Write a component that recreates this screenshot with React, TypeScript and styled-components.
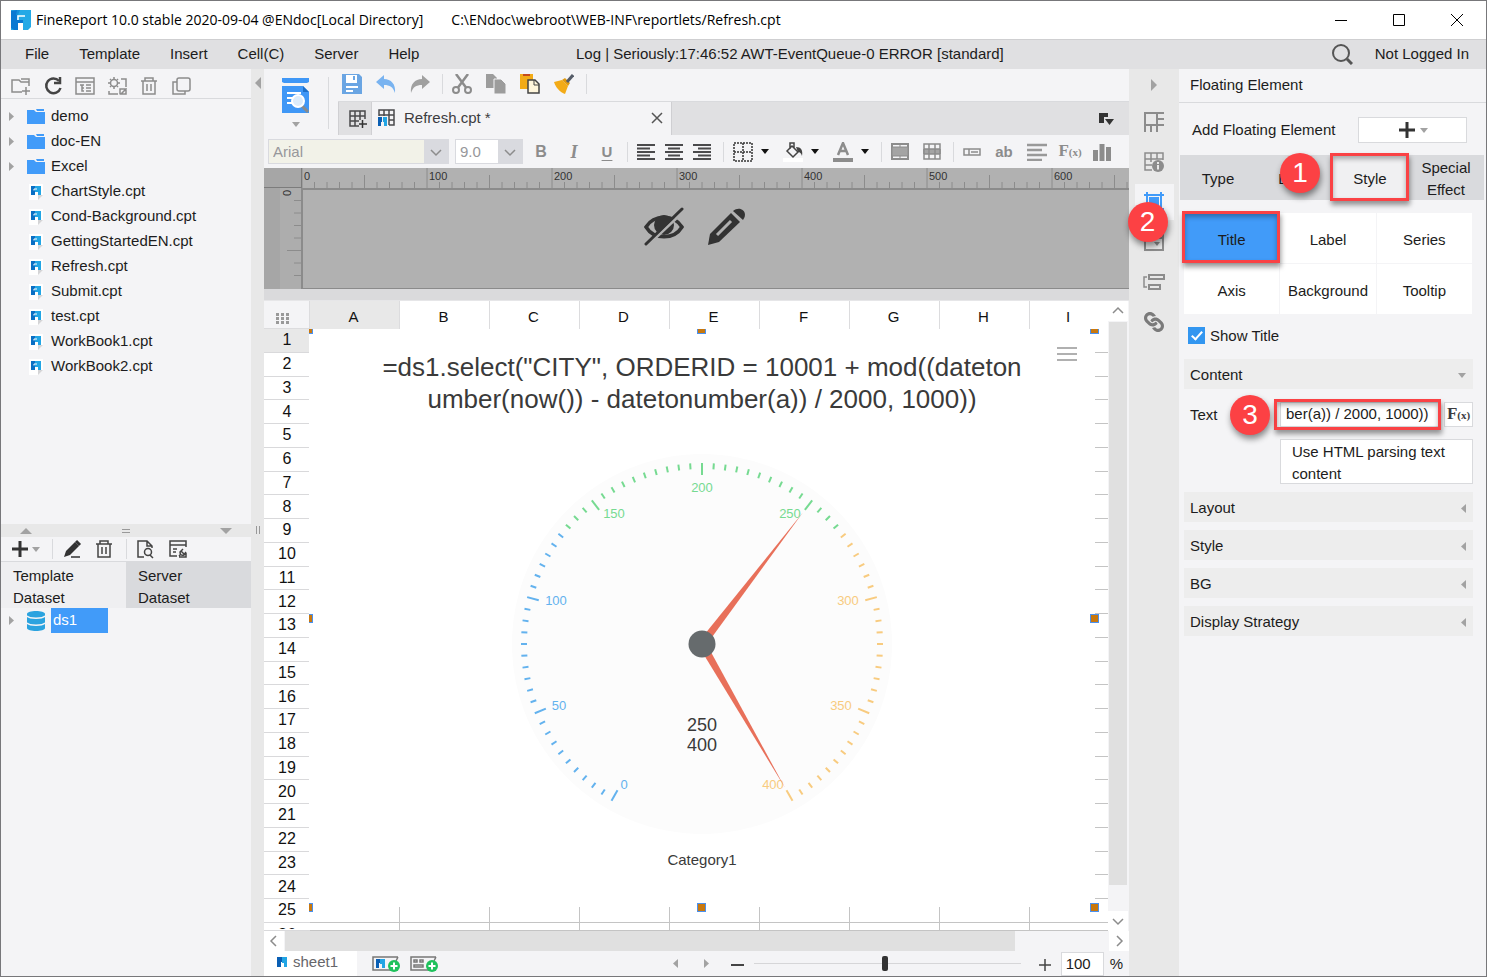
import React from "react";
import styled, { createGlobalStyle, css } from "styled-components";
import { FaLink } from "react-icons/fa";

const GlobalStyle = createGlobalStyle`
  *, *::before, *::after { box-sizing: border-box; }
  body { margin: 0; background: #f4f4f6; }
  body, button, input, select {
    font-family: "Liberation Sans", Arial, sans-serif;
    font-size: 15px;
    line-height: 22px;
    color: #1c1c20;
  }
  button {
    display: inline-flex; align-items: center; justify-content: center;
    flex: none; margin: 0; padding: 0; border: 0; background: none;
  }
  ul { list-style: none; margin: 0; padding: 0; }
  svg { display: block; flex: none; }
`;

/* ---------- window frame ---------- */

const Window = styled.div`
  display: flex; flex-direction: column;
  min-height: 100vh; min-width: 1200px;
  border: 1px solid #77777a;
  background: #f4f4f6;
`;
const TitleBar = styled.header`
  display: flex; align-items: center;
  height: 39px; padding-left: 10px;
  background: #fff; border-bottom: 1px solid #cfcfd1;
`;
const TitleText = styled.h1`
  display: flex; gap: 28px; margin: 0 0 0 5px; flex: 1;
  font: 400 14px/22px "Open Sans", "Noto Sans", sans-serif;
  color: #000; white-space: nowrap;
`;
const WindowButton = styled.button`width: 58px; height: 38px;`;
const MenuBar = styled.div`
  display: grid; grid-template-columns: 575px 1fr auto;
  align-items: center; height: 29px; padding-bottom: 2px; background: #e0e0e2;
`;
const Menus = styled.nav`display: flex; gap: 30px; padding-left: 24px;`;
const Account = styled.div`display: flex; align-items: center; gap: 22px; padding-right: 17px;`;
const Body = styled.div`display: flex; flex: 1;`;
const VLine = styled.span<{ $h?: number }>`
  flex: none; width: 1px; height: ${p => p.$h ?? 20}px; background: #d9dadd;
  margin: 0 9px 0 12px;
`;

/* ---------- left side ---------- */

const LeftSide = styled.aside`display: flex; flex-direction: column; flex: none; width: 250px;`;
const FilePane = styled.section`flex: 1;`;
const DataPane = styled.section`height: 452px;`;
const IconBar = styled.div<{ $h: number; $gap: number; $pad: number }>`
  display: flex; align-items: center; gap: ${p => p.$gap}px;
  height: ${p => p.$h}px; padding: ${p => p.$pad}px 10px 0;
  border-bottom: 1px solid #d9dadd;
`;
const Tree = styled.ul`padding-top: 5px;`;
const TreeRow = styled.li`
  display: grid; grid-template-columns: 18px 24px auto;
  align-items: center; justify-content: start;
  height: 25px; padding-left: 8px;
`;
const TreeLabel = styled.button<{ $on?: boolean }>`
  justify-content: flex-start; height: 25px; padding: 0 0 1px;
  ${p => p.$on && css`width: 57px; padding-left: 2px; background: #419bf9; color: #fff;`}
`;
const PaneGrip = styled.div`
  display: flex; align-items: center; justify-content: space-between;
  height: 13px; padding: 0 19px; background: #e8e8e8;
`;
const DatasetTabs = styled.div`display: grid; grid-template-columns: 1fr 1fr;`;
const DatasetTab = styled.button<{ $on?: boolean }>`
  height: 46px; padding: 4px 36px 0 12px; text-align: left; justify-content: flex-start;
  background: ${p => (p.$on ? "#efeff1" : "#d9dadd")};
`;
const SideSplitter = styled.div`
  display: flex; flex-direction: column; align-items: center; justify-content: space-between;
  flex: none; width: 13px; padding-top: 8px; padding-bottom: 442px;
  background: #e8e8e8;
`;

/* ---------- centre ---------- */

const Center = styled.main`display: flex; flex-direction: column; flex: 1; min-width: 0;`;
const TopTools = styled.div`display: flex; height: 66px;`;
const PreviewButton = styled.button`
  flex-direction: column; gap: 8px; justify-content: flex-start;
  width: 64px; padding-top: 8px;
`;
const PreviewLine = styled.span`width: 1px; height: 52px; margin: 8px 9px 0 0; background: #d9dadd;`;
const ToolsColumn = styled.div`flex: 1; min-width: 0;`;
const Tools = styled.div`display: flex; align-items: center; height: 32px; padding: 0 0 2px 4px;`;
const ToolGroup = styled.div<{ $gap: number }>`display: flex; align-items: center; gap: ${p => p.$gap}px;`;
const TextTools = styled(ToolGroup)`padding-left: 4px;`;
const FileTabs = styled.div`
  display: flex; height: 34px; background: #e0e0e2; border-top: 1px solid #d9dadd;
`;
const NewTab = styled.button`width: 34px; padding-left: 6px; border: 1px solid #d0d0d3; border-width: 0 1px;`;
const FileTab = styled.div`
  display: flex; align-items: center; gap: 8px;
  width: 300px; padding: 0 8px 2px 6px;
  background: #f4f4f6; border-right: 1px solid #cfcfd2; color: #3c3c40;
`;
const FileTabName = styled.span`flex: 1;`;
const TabList = styled.button`margin-left: auto; width: 44px;`;
const FormatBar = styled.div`
  display: flex; align-items: center; height: 33px; padding-left: 4px;
`;
const Combo = styled.label<{ $w: number; $tint?: boolean }>`
  display: flex; align-items: stretch; width: ${p => p.$w}px; height: 25px; margin-right: 6px;
  border: 1px solid #d9dadf; background: ${p => (p.$tint ? "#f2f2e8" : "#fff")};
`;
const ComboSelect = styled.select`
  appearance: none; flex: 1; min-width: 0; padding: 0 4px; border: 0; background: none;
  color: #97979b; border-radius: 0; opacity: 1;
`;
const ComboArrow = styled.span`
  display: flex; align-items: center; justify-content: center; width: 24px; background: #d9dadf;
`;
const TextTool = styled.button<{ $kind: "b" | "i" | "u" }>`
  width: 16px; height: 22px; color: #8c8c8c; font-weight: 700; font-size: 16px;
  ${p => p.$kind === "i" && css`font-family: "Liberation Serif", serif; font-style: italic; font-size: 18px;`}
  ${p => p.$kind === "u" && css`text-decoration: underline; text-underline-offset: 3px; font-size: 15px;`}
`;
const DropTool = styled.button`gap: 8px;`;
const WordTool = styled.button`
  width: 20px; height: 22px; font-weight: 700; color: #8c8c8c;
`;
const FxWord = styled.span<{ $dark?: boolean }>`
  font: 700 17px/22px "Liberation Serif", serif; color: ${p => (p.$dark ? "#3c3c40" : "#8c8c8c")};
  small { font-size: 11px; font-weight: 700; }
`;

const ParamPane = styled.section`
  display: grid; grid-template-columns: 16px 21px 1fr; grid-template-rows: 20px 101px;
  background: #a6a6a6;
`;
const RulerTop = styled.svg`
  grid-column: 3; width: 100%; height: 20px; background: #b1b1b1; border-left: 1px solid #7c7c7c;
`;
const RulerCorner = styled.span`grid-column: 1 / 3; border-bottom: 1px solid #7c7c7c; background: #a6a6a6;`;
const RulerSide = styled.svg`grid-column: 2; grid-row: 2; width: 21px; height: 101px; background: #adadad;`;
const ParamCanvas = styled.div`
  grid-column: 3; display: flex; justify-content: center; gap: 22px;
  padding: 17px 42px 0 0; background: #b1b1b1;
  border: solid #8b8b8b; border-width: 2px 0 1px 2px;
`;
const PaneStrip = styled.div`height: 12px; background: #dadadc; border-bottom: 1px solid #e6e6e8;`;

const SheetArea = styled.section`display: flex; flex: 1;`;
const SheetView = styled.div`position: relative; display: flex; flex: 1; min-width: 0; overflow: hidden; background: #fff;`;
const Grid = styled.table`
  flex: 1; width: 100%; table-layout: fixed; border-collapse: separate; border-spacing: 0;
  th, td { padding: 0; font-weight: 400; font-size: 16px; line-height: 20px; color: #111; }
  td { border: solid #c4c4c4; border-width: 0 1px 1px 0; }
  td:last-child { border-right: 0; }
`;
const HeadCell = styled.th<{ $on?: boolean }>`
  height: 28px; border-right: 1px solid #dcdcde;
  background: ${p => (p.$on ? "#e8e8e8" : "#fff")};
  && { padding: 4px 2px 0 0; font-size: 15px; }
  &:last-child { border-right: 0; }
`;
const CornerCell = styled.th`height: 28px; background: #f4f4f6; border: solid #dcdcde; border-width: 0 1px 1px 0;`;
const RowHead = styled.th<{ $on?: boolean }>`
  background: ${p => (p.$on ? "#e8e8e8" : "#fff")};
  border: solid #d9d9db; border-width: 0 0 1px;
`;
const CutRow = styled.div`height: 6px; overflow: hidden; line-height: 24px;`;
const FloatLayer = styled.div`position: absolute; inset: 28px 0 0 45px; overflow: hidden; pointer-events: none;`;
const FloatFrame = styled.div`
  position: absolute; inset: 0 13px 24px 0; display: flex; flex-direction: column; align-items: center;
  background: #fff; color: #3a3a3a;
`;
const Handle = styled.span<{ $x: number; $y: number }>`
  position: absolute; left: ${p => p.$x}%; top: ${p => p.$y}%;
  width: 9px; height: 9px; margin: -4px 0 0 -5px;
  background: #c8780f; border: 1px solid #4a90ee;
`;
const ChartMenu = styled.button`position: absolute; top: 17px; right: 18px;`;
const ChartTitle = styled.h2`
  margin: 22px 0 0; text-align: center; font-weight: 400; font-size: 26px; line-height: 32px; white-space: nowrap;
`;
const Gauge = styled.svg`margin-top: 24px; flex: 1; min-height: 380px; font-size: 13px; text-anchor: middle;`;
const Category = styled.p`margin: 0 0 36px; line-height: 22px;`;

const ScrollColumn = styled.div`display: flex; flex-direction: column; width: 21px; background: #f4f4f6;`;
const ScrollArrow = styled.button`width: 20px; height: 20px; background: #fff;`;
const ScrollThumbV = styled.span`flex: 1; margin: 1px 2px 26px 1px; background: #e0e0e0;`;
const ScrollRow = styled.div`display: flex; height: 20px; background: #f4f4f6;`;
const ScrollThumbH = styled.span`flex: 1; margin: 0 94px 0 1px; background: #e0e0e0;`;
const SheetBar = styled.footer`display: flex; align-items: center; height: 25px;`;
const SheetTab = styled.button`
  gap: 4px; justify-content: flex-start; width: 93px; height: 25px; margin-right: 15px; padding: 0 0 4px 11px;
  background: #fff; color: #66666a;
`;
const AddSheet = styled.button`margin-right: 10px;`;
const ZoomTools = styled.div`display: flex; align-items: center; margin-left: auto; padding-right: 6px;`;
const ZoomRange = styled.input`
  appearance: none; width: 267px; height: 16px; margin: 0 18px 0 2px; background: transparent;
  &::-webkit-slider-runnable-track { height: 1px; background: #d6d6d8; }
  &::-webkit-slider-thumb {
    appearance: none; width: 6px; height: 15px; margin-top: -7px; border-radius: 2px; background: #333;
  }
`;
const ZoomInput = styled.input`
  width: 43px; height: 24px; margin: 0 6px 0 10px; padding: 0 4px; border: 1px solid #d9dadd; background: #fff;
`;
const StepArrow = styled.button`width: 31px; height: 20px;`;

/* ---------- right side ---------- */

const Rail = styled.nav`
  display: flex; flex-direction: column; align-items: center; flex: none; width: 50px; background: #e8e8e8;
`;
const RailButton = styled.button<{ $on?: boolean }>`
  position: relative; width: 39px; height: 36px; margin-bottom: 4px; color: #7a7a7a;
  background: ${p => (p.$on ? "#f4f4f6" : "none")};
`;
const ChainIcon = styled(FaLink)`width: 20px; height: 20px; transform: rotate(90deg);`;
const Fold = styled.button`height: 31px; width: 39px; margin-bottom: 4px;`;
const Badge = styled.span<{ $left: number; $top: number }>`
  position: absolute; z-index: 3; left: ${p => p.$left}px; top: ${p => p.$top}px;
  display: flex; align-items: center; justify-content: center;
  width: 40px; height: 40px; border-radius: 50%; background: #fc4144; color: #fff;
  font-size: 28px; line-height: 32px; box-shadow: 1px 4px 6px rgba(0, 0, 0, 0.45);
`;
const marked = css`
  position: relative;
  &::after {
    content: ""; position: absolute; z-index: 2; inset: -2px -1px 0 -2px; border: 3px solid #fa4245;
    box-shadow: 1px 4px 5px rgba(0, 0, 0, 0.4), inset 0 3px 5px rgba(0, 0, 0, 0.3);
    pointer-events: none;
  }
`;
const Inspector = styled.aside`flex: none; width: 307px;`;
const InspectorTitle = styled.h2`
  margin: 0; height: 34px; padding: 5px 11px; font-weight: 400; font-size: 15px; line-height: 22px;
  border-bottom: 1px solid #d9dadd;
`;
const AddRow = styled.div`
  display: flex; align-items: center; justify-content: space-between; height: 52px; padding: 2px 19px 0 13px;
`;
const AddButton = styled.button`gap: 4px; width: 109px; height: 26px; background: #fff; border: 1px solid #d9dadd;`;
const PropTabs = styled.div`
  display: grid; grid-template-columns: repeat(4, 1fr); margin: 0 2px 0 1px; height: 45px; background: #d9dadd;
`;
const PropTab = styled.button<{ $on?: boolean }>`
  padding-top: 2px;
  ${p => p.$on && css`background: #f0f0f2; ${marked}`}
`;
const PartGrid = styled.div`
  display: grid; grid-template-columns: repeat(3, 1fr); grid-auto-rows: 50px; gap: 1px;
  margin: 13px 14px 0 5px; background: #f4f4f6;
`;
const PartButton = styled.button<{ $on?: boolean }>`
  background: #fff; padding-top: 4px;
  ${p => p.$on && css`background: #419bf9; ${marked}`}
`;
const CheckRow = styled.label`display: flex; align-items: center; gap: 5px; height: 45px; padding: 0 0 2px 9px;`;
const Check = styled.input`
  appearance: none; width: 17px; height: 17px; margin: 0; background: #3296f0;
  display: grid; place-items: center;
  &::before { content: ""; width: 6px; height: 11px; margin-top: -3px; border: solid #fff; border-width: 0 2px 2px 0; transform: rotate(42deg); }
`;
const Sections = styled.div`display: flex; flex-direction: column; gap: 8px; margin: 0 13px 0 5px;`;
const Section = styled.button`
  justify-content: space-between; width: 100%; height: 30px; padding: 2px 7px 0 6px; background: #ededed;
`;
const ContentForm = styled.div`
  display: grid; grid-template-columns: 86px 160px 29px; column-gap: 4px; row-gap: 12px; align-items: center;
  padding: 5px 0 0 6px;
`;
const FieldLabel = styled.label`position: relative;`;
const FieldBox = styled.div`${marked} &::after { inset: -3px -1px -3px -6px; }`;
const Field = styled.input`
  display: block; width: 100%; height: 25px; padding: 0 4px 2px 5px; border: 1px solid #d9dadd; background: #fff;
`;
const FxButton = styled.button`width: 29px; height: 25px; background: #fff; border: 1px solid #d9dadd;`;
const HtmlButton = styled.button`
  grid-column: 2 / 4; height: 45px; padding: 2px 20px 0 11px; justify-content: flex-start; text-align: left;
  background: #fff; border: 1px solid #d9dadd; line-height: 22px;
`;

/* ---------- icons ---------- */

type Draw = { w?: number; h?: number; c?: string; s?: number; children: React.ReactNode };
const Icon = ({ w = 20, h = 20, c = "#8c8c8c", s = 2, children }: Draw) => (
  <svg width={w} height={h} viewBox={`0 0 ${w} ${h}`} fill="none" stroke={c} strokeWidth={s} aria-hidden="true">
    {children}
  </svg>
);
const Caret = ({ dir, c = "#a2a2a2", big }: { dir: "l" | "r" | "u" | "d"; c?: string; big?: boolean }) => {
  const wide = dir === "u" || dir === "d";
  const a = big ? 12 : wide ? 8 : 9, b = big ? 6 : 5;
  const d = { r: `M0 0V${a}L${b} ${a / 2}Z`, l: `M${b} 0V${a}L0 ${a / 2}Z`, u: `M0 ${b}H${a}L${a / 2} 0Z`, d: `M0 0H${a}L${a / 2} ${b}Z` }[dir];
  return <svg width={wide ? a : b} height={wide ? b : a} aria-hidden="true"><path d={d} fill={c} /></svg>;
};
const Chevron = ({ d, c = "#8c8c8c" }: { d: string; c?: string }) => <Icon w={14} h={14} s={1.5} c={c}><path d={d} /></Icon>;

const Logo = ({ size }: { size: number }) => (
  <svg width={size} height={size} viewBox="0 0 20 20" aria-hidden="true">
    <path d="M0 0H20V17L17 20H0Z" fill="#24a9e6" />
    <path d="M0 1L6 0V20H3L0 18Z" fill="#0a79d2" />
    <path d="M6 0H9L7 5H5Z" fill="#1590dc" />
    <path d="M3 10H12V13H7V20H3Z" fill="#0a79d2" />
    <path d="M7 10V6H14" stroke="#fff" strokeWidth="1.5" fill="none" />
    <path d="M7 13H12V20H7Z" fill="#fff" />
  </svg>
);
const FolderIcon = () => (
  <svg width="18" height="15" aria-hidden="true"><path d="M0 1H7L9 3H18V15H0Z" fill="#419bf9" /><path d="M9 0H17V2H10Z" fill="#419bf9" /></svg>
);
const FileIcon = () => (
  <svg width="18" height="18" viewBox="0 0 18 18" aria-hidden="true">
    <path d="M2 1H16V12L11 17H2Z" fill="#fff" /><path d="M11 17V12H16Z" fill="#d4d4d6" />
    <path d="M4 3H8V12H4Z" fill="#0a6fc4" /><path d="M8 3H14V12H11V9H8Z" fill="#22a5e4" />
    <path d="M7 7.500V6H10" stroke="#fff" fill="none" />
  </svg>
);
const DbIcon = () => (
  <svg width="18" height="20" viewBox="0 0 18 20" aria-hidden="true">
    <path d="M0 3V17C0 21 18 21 18 17V3C18-1 0-1 0 3Z" fill="#2ba3df" />
    <path d="M0 5C2 8 16 8 18 5M0 12C2 15 16 15 18 12" stroke="#f4f4f6" fill="none" strokeWidth="1.5" />
  </svg>
);
const Trash = ({ c }: { c?: string }) => (
  <Icon c={c} s={1.5}><path d="M2 5H18M6 5V2H14V5M4 5V18H16V5M8 8V15M12 8V15" /></Icon>
);
const Plus = () => <Icon w={18} h={18} c="#333" s={3}><path d="M1 9H17M9 1V17" /></Icon>;
const Lines = ({ rows, c = "#4a4a4c", w = 18, s = 2 }: { rows: number[][]; c?: string; w?: number; s?: number }) => (
  <Icon w={w} h={18} c={c} s={s}>{rows.map(([a, b], i) => <path key={i} d={`M${a} ${2 + i * (s === 2 ? 3.5 : 5)}H${b}`} />)}</Icon>
);
const GreenPlus = () => (
  <><circle cx="22" cy="11" r="6" fill="#1fc15c" stroke="none" /><path d="M18.5 11H25.5M22 7.5V14.5" stroke="#fff" strokeWidth="2" /></>
);
const TableGlyph = ({ children }: { children?: React.ReactNode }) => (
  <Icon w={18} h={18} c="#4a4a4c" s={1.5}><path d="M10 16H1V1H16V9M1 6H16M1 11H10M6 1V16M11 1V10" />{children}</Icon>
);

/* ---------- gauge ---------- */

const bandColor = (v: number) => (v < 133.4 ? "#63b2ee" : v < 266.7 ? "#76da91" : "#f8cb7f");
const dialPoint = (v: number, r: number) => {
  const a = ((v * 0.75 - 150) * Math.PI) / 180;
  return [190 + r * Math.sin(a), 190 - r * Math.cos(a)];
};
const dialLabels: [number, number, number][] = [
  [0, 112, 335], [50, 47, 256], [100, 44, 151], [150, 102, 64], [200, 190, 38],
  [250, 278, 64], [300, 336, 151], [350, 329, 256], [400, 261, 335],
];
const Needle = ({ v }: { v: number }) => (
  <path d="M186 190L190 24L194 190Z" fill="#e8705a" transform={`rotate(${v * 0.75 - 150} 190 190)`} />
);
const GaugeChart = () => (
  <Gauge width="380" viewBox="0 0 380 380" role="img" aria-label="Gauge">
    <circle cx="190" cy="190" r="190" fill="#fcfcfc" />
    {Array.from({ length: 81 }, (_, i) => {
      const v = i * 5, major = i % 10 === 0;
      const [x1, y1] = dialPoint(v, 181), [x2, y2] = dialPoint(v, major ? 169 : 175);
      return <line key={v} x1={x1} y1={y1} x2={x2} y2={y2} stroke={bandColor(v)} strokeWidth={2} />;
    })}
    {dialLabels.map(([v, x, y]) => <text key={v} x={x} y={y} fill={bandColor(v)}>{v}</text>)}
    <Needle v={250} /><Needle v={400} />
    <circle cx="190" cy="190" r="13.5" fill="#666b6d" />
    <text x="190" y="277" fontSize="18" fill="#3a3a3a">250</text>
    <text x="190" y="297" fontSize="18" fill="#3a3a3a">400</text>
  </Gauge>
);

/* ---------- data ---------- */

const folders = ["demo", "doc-EN", "Excel"];
const files = ["ChartStyle.cpt", "Cond-Background.cpt", "GettingStartedEN.cpt", "Refresh.cpt", "Submit.cpt", "test.cpt", "WorkBook1.cpt", "WorkBook2.cpt"];
const columns = "ABCDEFGHI".split("");
const handles = [[0, 0], [50, 0], [100, 0], [0, 50], [100, 50], [0, 100], [50, 100], [100, 100]];

const LeftPanel = () => (
  <LeftSide>
    <FilePane>
      <IconBar $h={30} $gap={12} $pad={4}>
        <button aria-label="New folder"><Icon s={1.5}><path d="M11 16H1V4H8L10 6H18V10M10 3H18V6M15 11V19M11 15H19" /></Icon></button>
        <button aria-label="Refresh"><Icon c="#444" s={2.5}><path d="M16 5A7.3 7.3 0 1 0 17.5 12" /><path d="M17 1V7H11" /></Icon></button>
        <button aria-label="Details"><Icon s={1.5}><path d="M1 2H19V18H1ZM1 6H19M5 9H9M7 9V15H9M7 12H9M11 9H16M11 12H16M11 15H16" /></Icon></button>
        <button aria-label="Settings"><Icon s={1.5}><circle cx="7" cy="7" r="3.5" /><path d="M7 1V3M7 11V13M1 7H3M11 7H13M3 3L4 4M10 10L11 11M11 3L10 4M3 11L4 10M14 3H19V11M2 15V18H11M13 18V13H19L14 18H19V13" /></Icon></button>
        <button aria-label="Delete"><Trash /></button>
        <button aria-label="Copy"><Icon s={1.5}><rect x="6" y="2" width="13" height="13" rx="2" /><path d="M6 6H2V18H14V15" /></Icon></button>
      </IconBar>
      <Tree>
        {folders.map(f => <TreeRow key={f}><Caret dir="r" /><FolderIcon /><TreeLabel>{f}</TreeLabel></TreeRow>)}
        {files.map(f => <TreeRow key={f}><span /><FileIcon /><TreeLabel>{f}</TreeLabel></TreeRow>)}
      </Tree>
    </FilePane>
    <DataPane>
      <PaneGrip><Caret dir="u" big /><Icon w={8} h={6} s={1} c="#999"><path d="M0 1.5H8M0 4.5H8" /></Icon><Caret dir="d" big /></PaneGrip>
      <IconBar $h={25} $gap={0} $pad={0}>
        <ToolGroup $gap={3}><Plus /><Caret dir="d" /></ToolGroup>
        <VLine />
        <ToolGroup $gap={12}>
          <button aria-label="Edit"><Icon c="#333"><path d="M2 18L4 12L13 3L17 7L8 16Z" fill="#333" stroke="none" /><path d="M14 2L18 6" strokeWidth="3" /><path d="M9 18H18" strokeWidth="1.5" /></Icon></button>
          <button aria-label="Delete dataset"><Trash c="#444" /></button>
        </ToolGroup>
        <VLine />
        <ToolGroup $gap={12}>
          <button aria-label="Preview dataset"><Icon c="#444" s={1.5}><path d="M8 18H2V2H11L16 7V9M11 2V7H16" /><circle cx="12" cy="13" r="3.5" /><path d="M14 16L17 19" /></Icon></button>
          <button aria-label="Connection"><Icon c="#444" s={1.5}><path d="M9 17H2V2H18V8M2 6H18M5 10H9M5 13H8M11 17L13 15M13 12L17 16M15 10L12 13Q12 17 16 16L18 13M11 18H18V14" /></Icon></button>
        </ToolGroup>
      </IconBar>
      <DatasetTabs><DatasetTab $on>Template Dataset</DatasetTab><DatasetTab>Server Dataset</DatasetTab></DatasetTabs>
      <ul><TreeRow><Caret dir="r" /><DbIcon /><TreeLabel $on>ds1</TreeLabel></TreeRow></ul>
    </DataPane>
  </LeftSide>
);

const TopToolbar = () => (
  <TopTools>
    <PreviewButton aria-label="Preview">
      <svg width="28" height="37" aria-hidden="true">
        <path d="M0 1H27V5L25 6H2L0 5ZM0 9H21L27 15V36H0Z" fill="#3f97f6" />
        <path d="M21 9V15H27Z" fill="#1d6fc8" />
        <path d="M5 16H19M5 21H12M5 26H11" stroke="#fff" strokeWidth="2" />
        <path d="M20 29L26 35" stroke="#8a8a8a" strokeWidth="3" />
        <circle cx="16" cy="24" r="6" fill="#dcecfb" stroke="#fff" strokeWidth="2" />
      </svg>
      <Caret dir="d" />
    </PreviewButton>
    <PreviewLine />
    <ToolsColumn>
      <Tools>
        <ToolGroup $gap={14}>
          <button aria-label="Save"><svg width="20" height="20" aria-hidden="true"><path d="M0 0H17L20 3V20H0Z" fill="#6aa5e3" /><path d="M4 1H15V9H4ZM4 12H16V14H4ZM4 16H11V18H4Z" fill="#fff" /><path d="M11 2H13V6H11Z" fill="#6aa5e3" /></svg></button>
          <button aria-label="Undo"><svg width="20" height="20" aria-hidden="true"><path d="M0 8L8 1V5C15 5 20 10 19 19C17 13 14 11 8 11V15Z" fill="#79b3f0" /></svg></button>
          <button aria-label="Redo"><svg width="20" height="20" aria-hidden="true"><path d="M20 8L12 1V5C5 5 0 10 1 19C3 13 6 11 12 11V15Z" fill="#a0a0a0" /></svg></button>
        </ToolGroup>
        <VLine />
        <ToolGroup $gap={14}>
          <button aria-label="Cut"><Icon s={2}><circle cx="4" cy="16" r="3" /><circle cx="16" cy="16" r="3" /><path d="M4 0L14 13.5M16 0L6 13.5" strokeWidth="2.5" /></Icon></button>
          <button aria-label="Copy cells"><svg width="20" height="20" aria-hidden="true"><path d="M0 0H7L11 4V14H0Z" fill="#9c9c9c" /><path d="M8 5H15L20 10V20H8Z" fill="#9c9c9c" stroke="#f4f4f6" /></svg></button>
          <button aria-label="Paste"><svg width="20" height="20" aria-hidden="true"><path d="M0 0H13V15H0Z" fill="#f3ab17" /><path d="M3 0H10V2H3Z" fill="#c54a1c" /><path d="M8 6H15L19 10V19H8Z" fill="#fff6dc" stroke="#444" strokeWidth="1.5" /><path d="M14 6V11H19" fill="none" stroke="#444" /></svg></button>
          <button aria-label="Format painter"><svg width="20" height="20" aria-hidden="true"><path d="M0 8L8 6L14 12L11 20C6 18 2 14 0 8Z" fill="#f3ab17" /><path d="M8 6L14 12L16 9L11 4Z" fill="#e09a10" /><path d="M13 8L19 1" stroke="#555c68" strokeWidth="3" /></svg></button>
        </ToolGroup>
        <VLine />
      </Tools>
      <FileTabs>
        <NewTab aria-label="New template"><TableGlyph><path d="M13.500 10V18M10 14H18" stroke="#333" /></TableGlyph></NewTab>
        <FileTab>
          <Icon w={18} h={18} c="#4a4a4c" s={1.5}><path d="M1 7V1H16V16H11M1 6H16M6 1V7M11 1V16M11 11H16" /><path d="M0 8H4V13H3V17H0Z" fill="#0a5fb4" stroke="none" /><path d="M5 8H9V17H6V13H5Z" fill="#22a5e4" stroke="none" /></Icon>
          <FileTabName>Refresh.cpt *</FileTabName>
          <button aria-label="Close tab"><Icon w={12} h={12} c="#555" s={1.5}><path d="M1 1L11 11M11 1L1 11" /></Icon></button>
        </FileTab>
        <TabList aria-label="Tab list"><Icon w={16} h={14} s={0}><path d="M0 1H9V5H5V11H0Z" fill="#333" /><path d="M6 7H15L10.500 13Z" fill="#333" /></Icon></TabList>
      </FileTabs>
    </ToolsColumn>
  </TopTools>
);

const FormatToolbar = () => (
  <FormatBar>
    <Combo $w={181} $tint><ComboSelect disabled aria-label="Font"><option>Arial</option></ComboSelect><ComboArrow><Chevron d="M2 5L7 10L12 5" /></ComboArrow></Combo>
    <Combo $w={68}><ComboSelect disabled aria-label="Font size"><option>9.0</option></ComboSelect><ComboArrow><Chevron d="M2 5L7 10L12 5" /></ComboArrow></Combo>
    <TextTools $gap={17}>
      <TextTool $kind="b">B</TextTool><TextTool $kind="i">I</TextTool><TextTool $kind="u">U</TextTool>
    </TextTools>
    <VLine />
    <ToolGroup $gap={10}>
      <button aria-label="Align left"><Lines rows={[[0, 18], [0, 13], [0, 18], [0, 13], [0, 18]]} /></button>
      <button aria-label="Align center"><Lines rows={[[0, 18], [3, 15], [0, 18], [3, 15], [0, 18]]} /></button>
      <button aria-label="Align right"><Lines rows={[[0, 18], [5, 18], [0, 18], [5, 18], [0, 18]]} /></button>
    </ToolGroup>
    <VLine />
    <ToolGroup $gap={14}>
      <DropTool aria-label="Borders"><Icon c="#333" s={1.5}><path d="M1 1H19V19H1ZM1 10H19M10 1V19" strokeDasharray="2 1" /></Icon><Caret dir="d" c="#111" /></DropTool>
      <DropTool aria-label="Fill color"><Icon c="#444" s={1.5}><path d="M0 16H20V20H0Z" fill="#fff" stroke="none" /><path d="M4 9L9 4L15 10L10 15ZM7 7V1H11V6" /><path d="M13 5C18 5 20 8 19 14C18 11 17 10 15 10Z" fill="#444" stroke="none" /></Icon><Caret dir="d" c="#111" /></DropTool>
      <DropTool aria-label="Font color"><Icon s={3}><path d="M5 13L10 1L15 13M6 9H14" strokeWidth="2.500" /><path d="M0 18H20" strokeWidth="4" /></Icon><Caret dir="d" c="#111" /></DropTool>
    </ToolGroup>
    <VLine />
    <ToolGroup $gap={14}>
      <button aria-label="Merge"><Icon w={18} h={18}><path d="M1 1H17V16H1Z" /><path d="M1 4H17V13H1Z" fill="#a4a4a4" stroke="#8c8c8c" strokeWidth="1" /><path d="M9 1V4M9 13V16" strokeWidth="1" /></Icon></button>
      <button aria-label="Unmerge"><Icon w={18} h={18} s={1.5}><path d="M0 6H18V11H0Z" fill="#a4a4a4" stroke="none" /><path d="M1 1H17V16H1ZM1 6H17M1 11H17M6 1V16M12 1V16" /></Icon></button>
    </ToolGroup>
    <VLine />
    <ToolGroup $gap={13}>
      <button aria-label="Widget"><Icon w={18} h={18} s={1.5}><path d="M1 6H17V12H1ZM6 6V12M8 9H15" /></Icon></button>
      <WordTool>ab</WordTool>
      <button aria-label="Paragraph"><Lines w={20} rows={[[0, 20], [0, 15], [0, 20], [0, 15]]} c="#999" s={2.5} /></button>
      <WordTool><FxWord>F<small>(x)</small></FxWord></WordTool>
      <button aria-label="Chart"><Icon w={18} h={18} s={5}><path d="M2.500 18V7M9 18V1M15.500 18V4" /></Icon></button>
    </ToolGroup>
  </FormatBar>
);

const Parameters = () => (
  <ParamPane>
    <RulerCorner />
    <RulerTop aria-hidden="true" fontSize="11" fill="#333">
      {Array.from({ length: 240 }, (_, i) => <path key={i} d={`M${i * 12.5} 20V${i % 10 === 0 ? 0 : i % 5 === 0 ? 7 : 14}`} stroke="#8c8c8c" />)}
      {Array.from({ length: 24 }, (_, i) => <text key={i} x={i * 125 + 2} y="12">{i * 100}</text>)}
    </RulerTop>
    <RulerSide aria-hidden="true" fontSize="11" fill="#333">
      {Array.from({ length: 7 }, (_, i) => <path key={i} d={`M${i === 4 ? 7 : 14} ${(i + 1) * 12.5}H21`} stroke="#8c8c8c" />)}
      <text transform="translate(11 8) rotate(-90)">0</text>
    </RulerSide>
    <ParamCanvas>
      <svg width="42" height="40" viewBox="0 0 42 40" aria-hidden="true">
        <path d="M3 20C11 7 31 7 39 20C31 33 11 33 3 20Z" fill="none" stroke="#333" strokeWidth="3.500" />
        <circle cx="21" cy="18" r="10" fill="#333" />
        <path d="M5 38L42 3" stroke="#b1b1b1" strokeWidth="3" />
        <path d="M3 37L39 2" stroke="#333" strokeWidth="3" strokeLinecap="round" />
      </svg>
      <svg width="40" height="40" viewBox="0 0 40 40" aria-hidden="true">
        <path d="M1 38L3 27L24 6L33 15L12 35Z" fill="#333" />
        <path d="M10 28L24 14" stroke="#b1b1b1" strokeWidth="3" />
        <path d="M26 4C33-2 42 5 36 13Z" fill="#333" />
      </svg>
    </ParamCanvas>
  </ParamPane>
);

const Sheet = () => (
  <SheetArea>
    <SheetView>
      <Grid>
        <colgroup><col width="46" />{columns.slice(0, 8).map(c => <col key={c} width="90" />)}<col /></colgroup>
        <thead>
          <tr>
            <CornerCell aria-label="Select all"><svg width="38" height="22" aria-hidden="true">{[12, 17, 22].map(x => [9, 13, 17].map(y => <rect key={`${x}${y}`} x={x} y={y} width="3" height="3" fill="#999" />))}</svg></CornerCell>
            {columns.map(c => <HeadCell key={c} scope="col" $on={c === "A"}>{c}</HeadCell>)}
          </tr>
        </thead>
        <tbody>
          {Array.from({ length: 25 }, (_, i) => (
            <tr key={i}><RowHead scope="row" $on={i === 0}>{i + 1}</RowHead>{columns.map(c => <td key={c} />)}</tr>
          ))}
          <tr><RowHead scope="row"><CutRow>26</CutRow></RowHead>{columns.map(c => <td key={c} />)}</tr>
        </tbody>
      </Grid>
      <FloatLayer>
        <FloatFrame>
          <ChartTitle>=ds1.select("CITY", ORDERID = 10001 + mod((dateton<br />umber(now()) - datetonumber(a)) / 2000, 1000))</ChartTitle>
          <GaugeChart />
          <Category>Category1</Category>
          <ChartMenu aria-label="Chart menu"><Icon w={20} h={16} c="#b0b0b0"><path d="M0 2H20M0 8H20M0 14H20" /></Icon></ChartMenu>
          {handles.map(([x, y]) => <Handle key={`${x}-${y}`} $x={x} $y={y} />)}
        </FloatFrame>
      </FloatLayer>
    </SheetView>
    <ScrollColumn>
      <ScrollArrow aria-label="Scroll up"><Chevron d="M2 9L7 4L12 9" /></ScrollArrow>
      <ScrollThumbV />
      <ScrollArrow aria-label="Scroll down"><Chevron d="M2 5L7 10L12 5" /></ScrollArrow>
    </ScrollColumn>
  </SheetArea>
);

const BottomBars = () => (
  <>
    <ScrollRow>
      <ScrollArrow aria-label="Scroll left"><Chevron d="M9 2L4 7L9 12" /></ScrollArrow>
      <ScrollThumbH />
      <ScrollArrow aria-label="Scroll right"><Chevron d="M5 2L10 7L5 12" /></ScrollArrow>
    </ScrollRow>
    <SheetBar>
      <SheetTab><Icon w={14} h={14} s={0}><path d="M2 2H7V7H6V12H2Z" fill="#0a5fb4" /><path d="M7 2H12V12H9V8H7Z" fill="#22a5e4" /></Icon>sheet1</SheetTab>
      <AddSheet aria-label="Add sheet"><Icon w={28} h={18} c="#777" s={1.5}><path d="M26 2H1V15H18M26 2L24 6" /><path d="M4 4H8V8H7V13H4Z" fill="#0a5fb4" stroke="none" /><path d="M8 4H13V13H10V9H8Z" fill="#22a5e4" stroke="none" /><GreenPlus /></Icon></AddSheet>
      <AddSheet aria-label="Add form sheet"><Icon w={28} h={18} c="#777" s={1.5}><path d="M26 2H1V15H18M26 2L24 6M4 5H7V7H4ZM10 5H13V7H10ZM4 10H13V12H4Z" /><GreenPlus /></Icon></AddSheet>
      <ZoomTools>
        <StepArrow aria-label="Previous sheet"><Caret dir="l" /></StepArrow>
        <StepArrow aria-label="Next sheet"><Caret dir="r" /></StepArrow>
        <button aria-label="Zoom out"><Icon w={30} h={14} c="#444"><path d="M9 8H22" /></Icon></button>
        <ZoomRange type="range" aria-label="Zoom" defaultValue={49} />
        <button aria-label="Zoom in"><Icon w={12} h={14} c="#444" s={1.5}><path d="M0 8H12M6 2V14" /></Icon></button>
        <ZoomInput aria-label="Zoom percent" defaultValue="100" />
        %
      </ZoomTools>
    </SheetBar>
  </>
);

const RailIcons = () => (
  <Rail>
    <Fold aria-label="Fold panel"><Caret dir="r" big /></Fold>
    <RailButton aria-label="Cell element"><Icon w={22} h={22}><path d="M2 21V2H21M14 2V21M2 14H21M14 8H21M8 14V21" /></Icon></RailButton>
    <RailButton aria-label="Cell attributes"><Icon w={22} h={22}><path d="M9 19H2V2H20V9M2 8H20M2 14H9M8 2V11M14 2V8" strokeWidth="1.5" /><circle cx="15" cy="15" r="6" fill="#8c8c8c" stroke="none" /><path d="M15 11V13M15 14V18.500" stroke="#e8e8e8" /></Icon></RailButton>
    <RailButton aria-label="Floating element" $on>
      <Icon w={22} h={22} c="#419bf9"><path d="M4 1V21M18 1V21M1 4H21M1 18H21" /><path d="M7 7H15V15H7Z" fill="#419bf9" /></Icon>
      <Badge $left={-7} $top={18}>2</Badge>
    </RailButton>
    <RailButton aria-label="Widget settings"><Icon w={22} h={22}><path d="M2 3H20V19H2ZM2 7H20" /><path d="M11 11H17L14 15Z" fill="#8c8c8c" stroke="none" /></Icon></RailButton>
    <RailButton aria-label="Conditions"><Icon w={22} h={22}><path d="M6 4H21V8H6ZM6 14H17V18H6Z" /><path d="M4 6H1V16H4" strokeWidth="1.5" /></Icon></RailButton>
    <RailButton aria-label="Hyperlink"><ChainIcon aria-hidden="true" /></RailButton>
  </Rail>
);

const RightPanel = () => (
  <Inspector>
    <InspectorTitle>Floating Element</InspectorTitle>
    <AddRow>Add Floating Element<AddButton aria-label="Add"><Plus /><Caret dir="d" /></AddButton></AddRow>
    <PropTabs>
      <PropTab>Type</PropTab><PropTab>Data</PropTab>
      <PropTab $on>Style<Badge $left={-52} $top={-2}>1</Badge></PropTab>
      <PropTab>Special Effect</PropTab>
    </PropTabs>
    <PartGrid>
      {["Title", "Label", "Series", "Axis", "Background", "Tooltip"].map(p => <PartButton key={p} $on={p === "Title"}>{p}</PartButton>)}
    </PartGrid>
    <CheckRow><Check type="checkbox" defaultChecked />Show Title</CheckRow>
    <Sections>
      <Section>Content<Caret dir="d" /></Section>
      <ContentForm>
        <FieldLabel htmlFor="title-text">Text<Badge $left={40} $top={-9}>3</Badge></FieldLabel>
        <FieldBox><Field id="title-text" defaultValue="ber(a)) / 2000, 1000))" /></FieldBox>
        <FxButton aria-label="Formula"><FxWord $dark>F<small>(x)</small></FxWord></FxButton>
        <HtmlButton>Use HTML parsing text content</HtmlButton>
      </ContentForm>
      {["Layout", "Style", "BG", "Display Strategy"].map(s => <Section key={s}>{s}<Caret dir="l" /></Section>)}
    </Sections>
  </Inspector>
);

export default function App() {
  return (
    <>
      <GlobalStyle />
      <Window>
        <TitleBar>
          <Logo size={20} />
          <TitleText>
            <span>FineReport 10.0 stable 2020-09-04 @ENdoc[Local Directory]</span>
            <span>C:\ENdoc\webroot\WEB-INF\reportlets/Refresh.cpt</span>
          </TitleText>
          <WindowButton aria-label="Minimize"><Icon w={12} h={12} c="#000" s={1}><path d="M0 6.500H12" /></Icon></WindowButton>
          <WindowButton aria-label="Maximize"><Icon w={12} h={12} c="#000" s={1}><path d="M.5 .5H11.500V11.500H.5Z" /></Icon></WindowButton>
          <WindowButton aria-label="Close"><Icon w={12} h={12} c="#000" s={1}><path d="M0 0L12 12M12 0L0 12" /></Icon></WindowButton>
        </TitleBar>
        <MenuBar>
          <Menus>{["File", "Template", "Insert", "Cell(C)", "Server", "Help"].map(m => <button key={m}>{m}</button>)}</Menus>
          <span>Log | Seriously:17:46:52 AWT-EventQueue-0 ERROR [standard]</span>
          <Account>
            <button aria-label="Search"><Icon w={22} h={22} c="#555"><circle cx="10" cy="10" r="8" /><path d="M16 16L21 21" strokeWidth="3" /></Icon></button>
            <button>Not Logged In</button>
          </Account>
        </MenuBar>
        <Body>
          <LeftPanel />
          <SideSplitter><Caret dir="l" big /><Icon w={6} h={8} s={1} c="#999"><path d="M1.500 0V8M4.500 0V8" /></Icon></SideSplitter>
          <Center>
            <TopToolbar />
            <FormatToolbar />
            <Parameters />
            <PaneStrip />
            <Sheet />
            <BottomBars />
          </Center>
          <RailIcons />
          <RightPanel />
        </Body>
      </Window>
    </>
  );
}
